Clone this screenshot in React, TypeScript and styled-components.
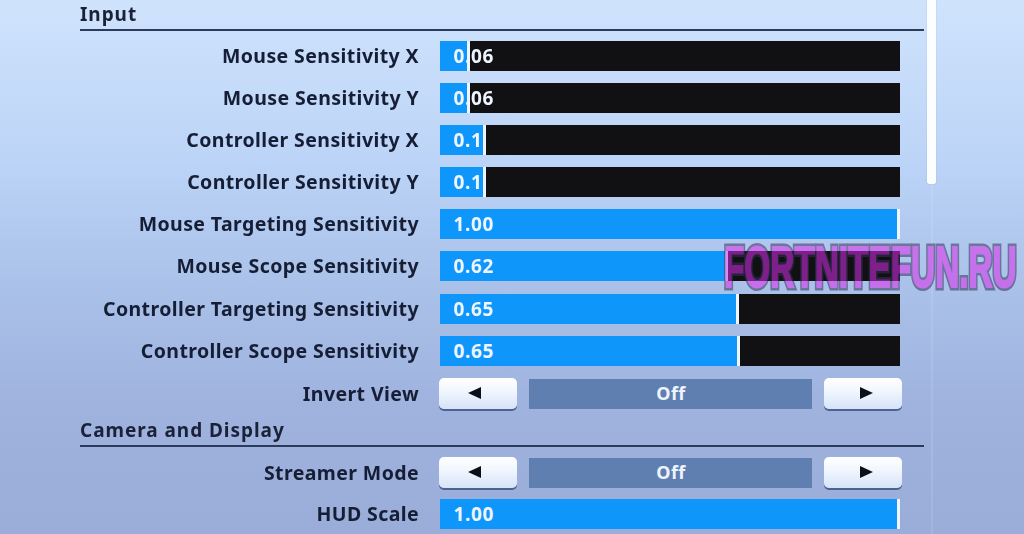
import React from "react";
import styled, { createGlobalStyle } from "styled-components";

const GlobalStyle = createGlobalStyle`
  html, body {
    margin: 0;
    padding: 0;
    height: 534px;
    overflow: hidden;
  }
  body {
    font-family: "Noto Sans", "Open Sans", "Liberation Sans", sans-serif;
  }
`;

const Screen = styled.div`
  position: relative;
  width: 1024px;
  height: 534px;
  overflow: hidden;
  box-sizing: border-box;
  padding-left: 80px;
  background: linear-gradient(180deg, #cfe3fc 0%, #bcd4f7 30%, #a9c0e8 55%, #9fb3de 75%, #9aadd9 100%);
`;

const Panel = styled.div`
  width: 844px;
  filter: blur(0.35px);
`;

const Section = styled.section`
  & + & {
    margin-top: 8px;
  }
`;

const SectionTitle = styled.h2`
  margin: 0;
  height: 29px;
  line-height: 28px;
  font-size: 19px;
  font-weight: 700;
  letter-spacing: 0.95px;
  color: #1a2238;
  border-bottom: 2px solid #2c3a5c;
`;

const Rows = styled.div`
  display: flex;
  flex-direction: column;
  gap: 12.1px;
  padding-top: 10px;
`;

const Row = styled.div`
  display: grid;
  grid-template-columns: 339px 460px;
  column-gap: 21px;
  align-items: center;
  height: 30px;
`;

const Label = styled.div`
  line-height: 28px;
  text-align: right;
  font-size: 19.5px;
  font-weight: 700;
  letter-spacing: 0.4px;
  color: #161e36;
  white-space: nowrap;
`;

const Track = styled.div`
  position: relative;
  display: flex;
  height: 30px;
`;

const Fill = styled.div`
  background: #0f96fb;
`;

const Divider = styled.div`
  flex: 0 0 3px;
  background: #eef5ff;
`;

const Rest = styled.div`
  flex: 1;
  background: #111113;
`;

const Value = styled.span`
  position: absolute;
  left: 13.5px;
  top: 0;
  line-height: 30px;
  font-size: 19px;
  font-weight: 700;
  letter-spacing: 0.6px;
  color: #eef5ff;
`;

const Selector = styled.div`
  display: grid;
  grid-template-columns: 78px 1fr 78px;
  column-gap: 12px;
  align-items: center;
  width: 463px;
  margin-left: -1px;
`;

const ArrowButton = styled.button<{ $side: "left" | "right" }>`
  display: flex;
  align-items: center;
  justify-content: center;
  box-sizing: border-box;
  height: 31px;
  margin: 0 0 2px;
  padding: ${(p) => (p.$side === "left" ? "0 8px 0 0" : "0 0 0 6px")};
  border: 0;
  border-radius: 5px;
  background: linear-gradient(180deg, #ffffff 0%, #f2f7fe 40%, #d6e3f8 100%);
  box-shadow: 0 2px 0 #4c6390;
`;

const OffValue = styled.div`
  box-sizing: border-box;
  height: 30px;
  padding-left: 1px;
  line-height: 28px;
  text-align: center;
  font-size: 18px;
  font-weight: 700;
  letter-spacing: 0.5px;
  color: #eef4fd;
  background: #5f7fb0;
`;

const ScrollRail = styled.div`
  position: absolute;
  left: 931px;
  top: 0;
  width: 2px;
  height: 534px;
  background: rgba(255, 255, 255, 0.1);
`;

const ScrollThumb = styled.div`
  position: absolute;
  left: 927px;
  top: 0;
  width: 9px;
  height: 184px;
  background: #fbfdff;
  border-radius: 0 0 2px 2px;
  box-shadow: 0 0 1px #7d8fb8;
`;

const Watermark = styled.div`
  position: absolute;
  left: 724px;
  top: 233px;
  font-family: "Liberation Sans", sans-serif;
  font-size: 57px;
  line-height: 68px;
  font-weight: 700;
  white-space: nowrap;
  transform-origin: left center;
  transform: scaleX(0.585);
  opacity: 0.55;
  filter: blur(0.5px);
  color: #d92fec;
  -webkit-text-stroke: 2px #d92fec;

  &::before {
    content: attr(data-text);
    position: absolute;
    left: 0;
    top: 0;
    z-index: -1;
    -webkit-text-stroke: 7px #34345a;
  }
`;

const Triangle = ({ side }: { side: "left" | "right" }) => (
  <svg width="15" height="14" viewBox="0 0 15 14">
    <polygon
      points={side === "left" ? "14,1 14,13 1,7" : "1,1 1,13 14,7"}
      fill="#0c0f18"
    />
  </svg>
);

interface ISlider {
  label: string;
  value: string;
  fill: number;
}

const inputSliders: ISlider[] = [
  { label: "Mouse Sensitivity X", value: "0.06", fill: 0.059 },
  { label: "Mouse Sensitivity Y", value: "0.06", fill: 0.059 },
  { label: "Controller Sensitivity X", value: "0.1", fill: 0.094 },
  { label: "Controller Sensitivity Y", value: "0.1", fill: 0.094 },
  { label: "Mouse Targeting Sensitivity", value: "1.00", fill: 0.9935 },
  { label: "Mouse Scope Sensitivity", value: "0.62", fill: 0.62 },
  { label: "Controller Targeting Sensitivity", value: "0.65", fill: 0.644 },
  { label: "Controller Scope Sensitivity", value: "0.65", fill: 0.646 }
];

const SliderRow = ({ label, value, fill }: ISlider) => (
  <Row>
    <Label>{label}</Label>
    <Track>
      <Fill style={{ width: `${fill * 100}%` }} />
      <Divider />
      <Rest />
      <Value>{value}</Value>
    </Track>
  </Row>
);

const SelectorRow = ({ label, value }: { label: string; value: string }) => (
  <Row>
    <Label>{label}</Label>
    <Selector>
      <ArrowButton $side="left">
        <Triangle side="left" />
      </ArrowButton>
      <OffValue>{value}</OffValue>
      <ArrowButton $side="right">
        <Triangle side="right" />
      </ArrowButton>
    </Selector>
  </Row>
);

const App: React.FC = () => {
  return (
    <Screen>
      <GlobalStyle />
      <Panel>
        <Section>
          <SectionTitle>Input</SectionTitle>
          <Rows>
            {inputSliders.map((s) => (
              <SliderRow key={s.label} {...s} />
            ))}
            <SelectorRow label="Invert View" value="Off" />
          </Rows>
        </Section>
        <Section>
          <SectionTitle>Camera and Display</SectionTitle>
          <Rows>
            <SelectorRow label="Streamer Mode" value="Off" />
            <SliderRow label="HUD Scale" value="1.00" fill={0.9935} />
          </Rows>
        </Section>
      </Panel>
      <ScrollRail />
      <ScrollThumb />
      <Watermark data-text="FORTNITEFUN.RU">FORTNITEFUN.RU</Watermark>
    </Screen>
  );
};

export default App;
